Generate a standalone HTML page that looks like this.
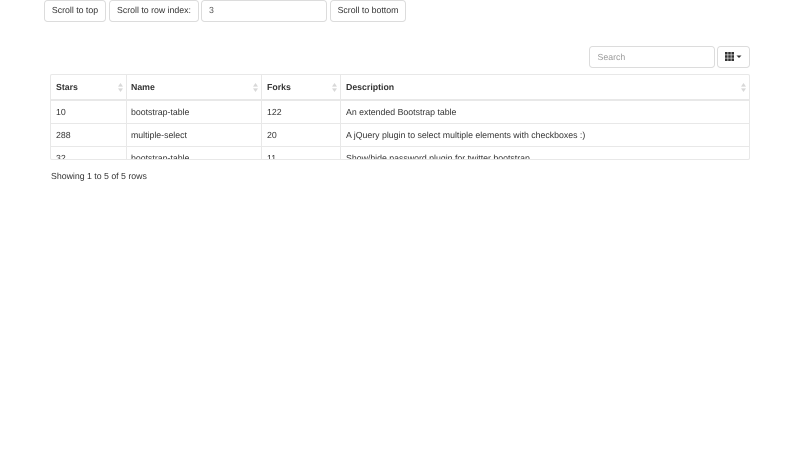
<!DOCTYPE html>
<html><head><meta charset="utf-8">
<style>
html,body{margin:0;padding:0;background:#fff;width:800px;height:450px;overflow:hidden}
body{font-family:"Liberation Sans",sans-serif;font-size:8.75px;color:#333;position:relative;text-rendering:geometricPrecision}
#w{position:absolute;left:0;top:0;width:800px;height:450px;filter:blur(.35px)}
.a{position:absolute;box-sizing:border-box;white-space:nowrap}
.b{background:#fff;border:1px solid #dcdcdc;border-radius:3.5px;height:21.5px;line-height:19px;text-align:center}
.i{background:#fff;border:1px solid #dcdcdc;border-radius:3.5px;height:21.5px;line-height:19px;padding-left:7px}
.t{position:absolute;left:50px;top:74px;width:700px;height:85.5px;box-sizing:border-box;border:1px solid #e8e8e8;border-radius:2px;overflow:hidden}
.v{position:absolute;background:#e8e8e8;width:1px;top:0;height:85px}
.h{position:absolute;left:0;width:698px;background:#e8e8e8}
.c{position:absolute;white-space:nowrap;line-height:12px}
.th{font-weight:bold}
.s{position:absolute;width:5px;height:9px}
</style></head>
<body><div id="w">
<div class="a b" style="left:44px;top:0;width:62px">Scroll to top</div>
<div class="a b" style="left:109px;top:0;width:90px">Scroll to row index:</div>
<div class="a i" style="left:201px;top:0;width:126px;color:#555">3</div>
<div class="a b" style="left:330px;top:0;width:76px">Scroll to bottom</div>

<div class="a i" style="left:589px;top:46px;width:126px;color:#999;line-height:20px;padding-left:7.5px">Search</div>
<div class="a b" style="left:717px;top:46px;width:33px">
<svg style="position:absolute;left:7px;top:5px" width="18" height="10" viewBox="0 0 18 10">
<g fill="#333"><rect x="0" y="0" width="2.6" height="2.6"/><rect x="3.2" y="0" width="2.6" height="2.6"/><rect x="6.4" y="0" width="2.6" height="2.6"/><rect x="0" y="3.2" width="2.6" height="2.6"/><rect x="3.2" y="3.2" width="2.6" height="2.6"/><rect x="6.4" y="3.2" width="2.6" height="2.6"/><rect x="0" y="6.4" width="2.6" height="2.6"/><rect x="3.2" y="6.4" width="2.6" height="2.6"/><rect x="6.4" y="6.4" width="2.6" height="2.6"/><path d="M11.5 3.5h5l-2.5 2.5z"/></g></svg>
</div>

<div class="t">
<div class="v" style="left:75px"></div>
<div class="v" style="left:210px"></div>
<div class="v" style="left:289px"></div>
<div class="h" style="top:24px;height:2px"></div>
<div class="h" style="top:48px;height:1px"></div>
<div class="h" style="top:71px;height:1px"></div>

<div class="c th" style="left:5px;top:6px">Stars</div>
<div class="c th" style="left:80px;top:6px">Name</div>
<div class="c th" style="left:216px;top:6px">Forks</div>
<div class="c th" style="left:295px;top:6px">Description</div>

<svg class="s" style="left:67px;top:8px" viewBox="0 0 5 9"><path fill="#d8d8d8" d="M2.5 0L5 3.6H0zM2.5 9L0 5.4h5z"/></svg>
<svg class="s" style="left:202px;top:8px" viewBox="0 0 5 9"><path fill="#d8d8d8" d="M2.5 0L5 3.6H0zM2.5 9L0 5.4h5z"/></svg>
<svg class="s" style="left:281px;top:8px" viewBox="0 0 5 9"><path fill="#d8d8d8" d="M2.5 0L5 3.6H0zM2.5 9L0 5.4h5z"/></svg>
<svg class="s" style="left:690px;top:8px" viewBox="0 0 5 9"><path fill="#d8d8d8" d="M2.5 0L5 3.6H0zM2.5 9L0 5.4h5z"/></svg>

<div class="c" style="left:5px;top:31px">10</div>
<div class="c" style="left:80px;top:31px">bootstrap-table</div>
<div class="c" style="left:216px;top:31px">122</div>
<div class="c" style="left:295px;top:31px">An extended Bootstrap table</div>

<div class="c" style="left:5px;top:54px">288</div>
<div class="c" style="left:80px;top:54px">multiple-select</div>
<div class="c" style="left:216px;top:54px">20</div>
<div class="c" style="left:295px;top:54px">A jQuery plugin to select multiple elements with checkboxes :)</div>

<div class="c" style="left:5px;top:77px">32</div>
<div class="c" style="left:80px;top:77px">bootstrap-table</div>
<div class="c" style="left:216px;top:77px">11</div>
<div class="c" style="left:295px;top:77px">Show/hide password plugin for twitter bootstrap.</div>
</div>

<div class="a" style="left:51px;top:170px;line-height:12px">Showing 1 to 5 of 5 rows</div>
</div></body></html>
